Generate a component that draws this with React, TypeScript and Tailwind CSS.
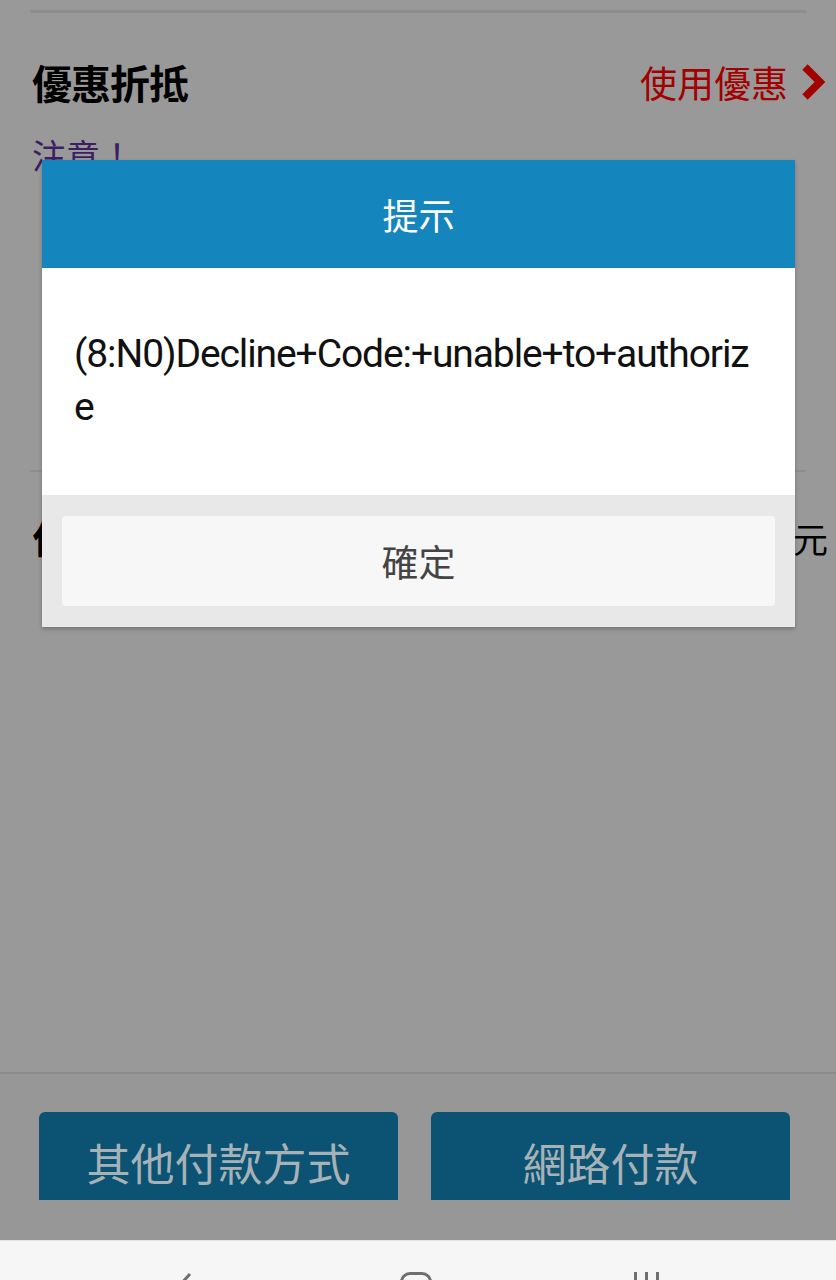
import React from "react";

const cjk = '"Noto Sans CJK TC", "Noto Sans", sans-serif';

export default function App() {
  return (
    <div
      className="relative w-[836px] h-[1280px] overflow-hidden bg-[#999999] flex flex-col"
      style={{ fontFamily: cjk }}
    >
      {/* underlying page */}
      <div className="flex-1 flex flex-col px-[30px] pt-[10px]">
        <div className="h-[3px] bg-[#8d8d8d]" />
        <div className="flex items-center justify-between pl-[2px] mt-[42px] h-[54px]">
          <span className="text-[40px] font-bold text-black leading-none tracking-[-1px]">優惠折抵</span>
          <span className="flex items-center gap-[12px] text-[37px] text-[#a30000] leading-none">
            使用優惠
            <svg width="26" height="36" viewBox="0 0 26 36" className="-mr-[20px]">
              <path d="M5 3 L20 18 L5 33" fill="none" stroke="#a30000" strokeWidth="7.5" strokeLinejoin="miter" />
            </svg>
          </span>
        </div>
        <div className="pl-[2px] mt-[24px] text-[34px] text-[#3c1f63] leading-[44px]">注意！</div>
        <div className="mt-[293px] h-[2px] bg-[#8d8d8d]" />
        <div className="flex items-center justify-between pl-[2px] mt-[40px] h-[50px]">
          <span className="text-[38px] font-bold text-black leading-none">付款金額</span>
          <span className="text-[35px] text-black leading-none -mr-[22px]">0 元</span>
        </div>
      </div>

      {/* bottom action bar */}
      <div className="h-[168px] border-t-[2px] border-[#8b8b8b] bg-[#979797] flex gap-[33px] px-[39px] pt-[38px]">
        <button className="w-[359px] h-[88px] rounded-t-[6px] bg-[#0c5272] text-[44px] text-[#a7b2b8] leading-none pt-[12px]">
          其他付款方式
        </button>
        <button className="w-[359px] h-[88px] rounded-t-[6px] bg-[#0c5272] text-[44px] text-[#a7b2b8] leading-none pt-[12px]">
          網路付款
        </button>
      </div>

      {/* android nav bar */}
      <div className="h-[40px] bg-[#f6f6f6] border-t border-[#e4e4e4] relative overflow-hidden">
        <div className="absolute left-[170px] top-[31px]">
          <svg width="24" height="30" viewBox="0 0 24 30">
            <path d="M20 2 L8 15 L20 28" fill="none" stroke="#6f6f6f" strokeWidth="3" />
          </svg>
        </div>
        <div className="absolute left-[400px] top-[31px] w-[32px] h-[32px] rounded-[10px] border-[3px] border-[#6f6f6f]" />
        <div className="absolute left-[634px] top-[31px] flex gap-[8px]">
          <div className="w-[3px] h-[30px] bg-[#6f6f6f]" />
          <div className="w-[3px] h-[30px] bg-[#6f6f6f]" />
          <div className="w-[3px] h-[30px] bg-[#6f6f6f]" />
        </div>
      </div>

      {/* modal dialog */}
      <div className="absolute left-[42px] top-[160px] w-[753px] bg-white shadow-[0_2px_4px_rgba(0,0,0,0.25)]">
        <div className="h-[108px] bg-[#1485bd] flex items-center justify-center text-[36px] text-white leading-none">
          提示
        </div>
        <div className="h-[227px] px-[32px] pt-[60px]">
          <p
            className="text-[39px] leading-[53px] tracking-[-1.1px] text-[#111111] whitespace-nowrap"
            style={{ fontFamily: 'Roboto, "Noto Sans CJK TC", sans-serif' }}
          >
            (8:N0)Decline+Code:+unable+to+authoriz
            <br />e
          </p>
        </div>
        <div className="h-[132px] bg-[#e8e8e8] px-[20px] py-[21px]">
          <button className="w-full h-[90px] rounded-[4px] bg-[#f7f7f7] text-[37px] text-[#444444] leading-none">
            確定
          </button>
        </div>
      </div>
    </div>
  );
}
